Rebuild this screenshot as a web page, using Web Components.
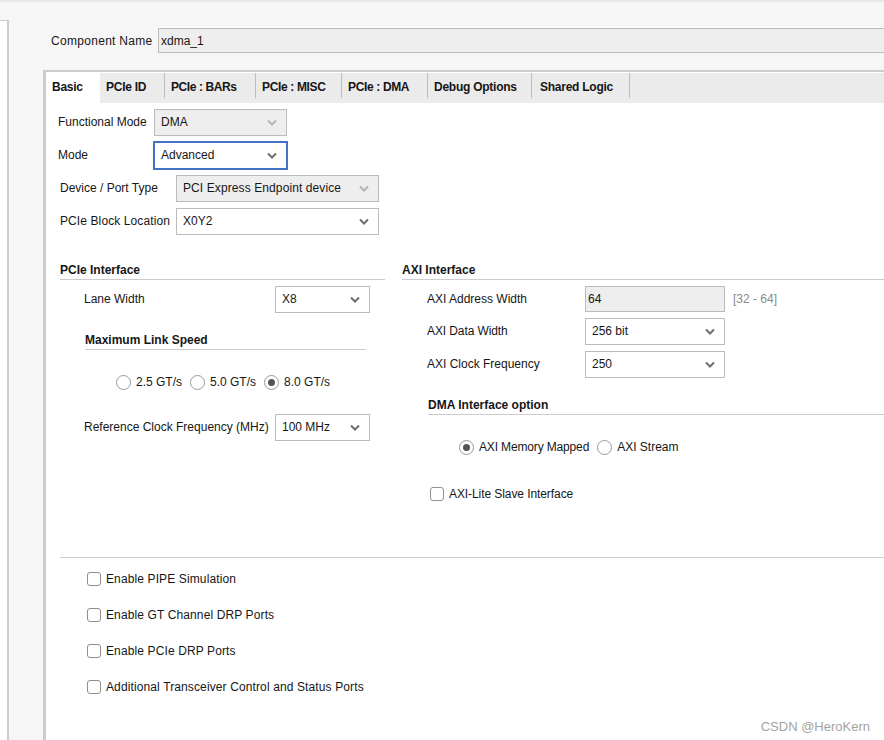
<!DOCTYPE html>
<html>
<head>
<meta charset="utf-8">
<style>
  html, body { margin: 0; height: 740px; overflow: hidden; }
  body { background: #f6f6f6; font: 12px "Liberation Sans", Arial, sans-serif; color: #161616; }
</style>
</head>
<body>
<ip-customizer>
  <ip-name-row slot="name">xdma_1</ip-name-row>
  <ip-tabs slot="tabs">
    <ip-tab active style="--w:54px">Basic</ip-tab>
    <ip-tab style="--w:65px">PCIe ID</ip-tab>
    <ip-tab style="--w:91px;letter-spacing:-.4px">PCIe : BARs</ip-tab>
    <ip-tab style="--w:86px;letter-spacing:-.35px">PCIe : MISC</ip-tab>
    <ip-tab style="--w:86px;letter-spacing:-.35px">PCIe : DMA</ip-tab>
    <ip-tab style="--w:104px">Debug Options</ip-tab>
    <ip-tab style="--w:98px" pad="8">Shared Logic</ip-tab>
  </ip-tabs>
  <basic-page slot="page"></basic-page>
</ip-customizer>

<script>
// small helper so each class does not repeat the shadow root setup
function shadow(el, html) {
  el.attachShadow({ mode: 'open' }).innerHTML = html;
}

// outer window: grey strip on top, side panel on the left, main column
class IpCustomizer extends HTMLElement {
  constructor() {
    super();
    shadow(this, `
      <style>
        :host { display: flex; height: 738px; border-top: 2px solid #e8e8e8; position: relative; }
        .side { width: 7px; margin-top: 18px; background: #fff; border-top: 1px solid #ccc; border-right: 2px solid #ccc; }
        .main { flex: 1; min-width: 0; margin-left: 34px; display: flex; flex-direction: column; }
        .box { flex: 1; margin-top: 17px; border-top: 2px solid #ccc; border-left: 3px solid #ccc; background: #fff; padding-top: 1px; }
        .mark { position: absolute; right: 14px; bottom: 6px; font-size: 13px; color: #a3a3a3; }
      </style>
      <div class="side"></div>
      <div class="main">
        <slot name="name"></slot>
        <div class="box">
          <slot name="tabs"></slot>
          <slot name="page"></slot>
        </div>
      </div>
      <div class="mark">CSDN @HeroKern</div>
    `);
  }
}

class IpNameRow extends HTMLElement {
  constructor() {
    super();
    shadow(this, `
      <style>
        :host { display: flex; align-items: center; margin-top: 26px; padding-left: 8px; height: 25px; }
        .label { width: 107px; letter-spacing: .3px; white-space: nowrap; }
        .field { flex: 1; height: 23px; line-height: 24px; padding-left: 2px; background: #eee;
                 border: 1px solid #bbb; border-right: 0; box-shadow: 0 -1px 0 #fff; }
      </style>
      <span class="label">Component Name</span>
      <div class="field"><slot></slot></div>
    `);
  }
}

class IpTabs extends HTMLElement {
  constructor() {
    super();
    shadow(this, `
      <style>
        :host { display: flex; height: 30px; background: #ebebeb; }
      </style>
      <slot></slot>
    `);
  }
}

class IpTab extends HTMLElement {
  constructor() {
    super();
    const pad = this.getAttribute('pad') || 6;
    shadow(this, `
      <style>
        :host { display: block; box-sizing: border-box; width: var(--w); height: 30px; letter-spacing: -.25px; }
        :host([active]) { background: #fff; }
        .in { box-sizing: border-box; height: 25px; line-height: 29px; padding-left: ${pad}px; font-weight: bold; white-space: nowrap; }
        :host(:not([active])) .in { border-right: 1px solid #bdbdbd; }
      </style>
      <div class="in"><slot></slot></div>
    `);
  }
}

// drop down, attributes: disabled, focused
class IpCombo extends HTMLElement {
  constructor() {
    super();
    shadow(this, `
      <style>
        :host { display: flex; box-sizing: border-box; flex: none; align-items: center; justify-content: space-between;
                width: var(--w, 133px); height: 27px; padding: 0 9px 0 6px; background: #fff; border: 1px solid #bbb; }
        :host([disabled]) { background: #eee; }
        :host([focused]) { border: 2px solid #4472c4; width: calc(var(--w, 133px) + 2px); height: 29px; margin: -1px; }
        span { padding-bottom: 2px; }
        svg { width: 10px; height: 7px; fill: none; stroke: #6e6e6e; stroke-width: 2; }
        :host([disabled]) svg { stroke: #b4b4b4; }
      </style>
      <span><slot></slot></span>
      <svg viewBox="0 0 10 7"><path d="M1 1.5 5 5.5 9 1.5"/></svg>
    `);
  }
}

class IpCheck extends HTMLElement {
  constructor() {
    super();
    shadow(this, `
      <style>
        :host { display: flex; align-items: center; height: 16px; gap: 5px; }
        i { box-sizing: border-box; width: 14px; height: 14px; background: #fff; border: 1px solid #8f8f8f; border-radius: 3px; }
      </style>
      <i></i><span><slot></slot></span>
    `);
  }
}

class IpRadio extends HTMLElement {
  constructor() {
    super();
    shadow(this, `
      <style>
        :host { display: inline-flex; align-items: center; height: 16px; gap: 5px; }
        i { box-sizing: border-box; width: 15px; height: 15px; border: 1px solid #999; border-radius: 50%; background: #fff;
            display: flex; align-items: center; justify-content: center; }
        :host([checked]) b { display: block; width: 7px; height: 7px; border-radius: 50%; background: #555; }
      </style>
      <i><b></b></i><span><slot></slot></span>
    `);
  }
}

// section title with the rule under it
class IpHeading extends HTMLElement {
  constructor() {
    super();
    shadow(this, `
      <style>
        :host { display: block; height: 19px; line-height: 21px; border-bottom: 1px solid #ccc; font-weight: bold; white-space: nowrap; }
      </style>
      <slot></slot>
    `);
  }
}

// label + control row, --l sets the label column
class IpRow extends HTMLElement {
  constructor() {
    super();
    shadow(this, `
      <style>
        :host { display: flex; align-items: center; height: 27px; }
        .label { flex: none; width: var(--l, 96px); white-space: nowrap; padding-bottom: var(--lift, 2px); }
      </style>
      <span class="label"><slot name="label"></slot></span>
      <slot></slot>
    `);
  }
}

class BasicPage extends HTMLElement {
  constructor() {
    super();
    shadow(this, `
      <style>
        :host { display: block; padding: 6px 0 0 12px; }
        .top ip-row { margin-bottom: 6px; }
        .top .a { --l: 96px; }
        .top .b { --l: 116px; margin-left: 2px; --w: 203px; }
        .cols { display: grid; grid-template-columns: 325px 1fr; column-gap: 17px; margin: 25px 0 0 2px; }
        .left .in { padding-left: 24px; }
        .right .in { padding-left: 25px; }
        .left ip-row { --l: 191px; --w: 95px; }
        .right ip-row { --l: 158px; --w: 140px; }
        .gap { margin-top: 6px; }
        .sub { margin: 17px 0 0 1px; }
        .left .sub { width: 281px; }
        .radios { display: flex; margin-top: 24px; gap: 8px; }
        .left .radios { padding-left: 32px; }
        .right .radios { padding-left: 32px; }
        .input { box-sizing: border-box; width: 140px; height: 26px; line-height: 24px; padding-left: 2px; background: #eee; border: 1px solid #bbb; }
        .hint { margin-left: 8px; color: #8a8a8a; }
        .lite { margin: 31px 0 0 3px; letter-spacing: -.08px; }
        hr { height: 1px; margin: 55px 0 0 2px; border: 0; background: #ccc; }
        .opts { display: flex; flex-direction: column; gap: 20px; margin: 13px 0 0 29px; letter-spacing: .12px; }
      </style>
      <div class="top">
        <ip-row class="a"><span slot="label">Functional Mode</span><ip-combo disabled>DMA</ip-combo></ip-row>
        <ip-row class="a"><span slot="label">Mode</span><ip-combo focused>Advanced</ip-combo></ip-row>
        <ip-row class="b"><span slot="label">Device / Port Type</span><ip-combo disabled style="letter-spacing:.1px">PCI Express Endpoint device</ip-combo></ip-row>
        <ip-row class="b"><span slot="label" style="letter-spacing:.1px">PCIe Block Location</span><ip-combo>X0Y2</ip-combo></ip-row>
      </div>
      <div class="cols">
        <div class="left">
          <ip-heading>PCIe Interface</ip-heading>
          <div class="in">
            <ip-row class="gap"><span slot="label">Lane Width</span><ip-combo>X8</ip-combo></ip-row>
            <ip-heading class="sub">Maximum Link Speed</ip-heading>
            <div class="radios">
              <ip-radio>2.5 GT/s</ip-radio>
              <ip-radio>5.0 GT/s</ip-radio>
              <ip-radio checked>8.0 GT/s</ip-radio>
            </div>
            <ip-row style="margin-top:24px"><span slot="label">Reference Clock Frequency (MHz)</span><ip-combo>100 MHz</ip-combo></ip-row>
          </div>
        </div>
        <div class="right">
          <ip-heading>AXI Interface</ip-heading>
          <div class="in">
            <ip-row class="gap" style="height:26px;--lift:0px"><span slot="label">AXI Address Width</span><div class="input">64</div><span class="hint">[32 - 64]</span></ip-row>
            <ip-row class="gap"><span slot="label" style="letter-spacing:-.1px">AXI Data Width</span><ip-combo>256 bit</ip-combo></ip-row>
            <ip-row class="gap"><span slot="label">AXI Clock Frequency</span><ip-combo>250</ip-combo></ip-row>
            <ip-heading class="sub">DMA Interface option</ip-heading>
            <div class="radios">
              <ip-radio checked style="letter-spacing:-.15px">AXI Memory Mapped</ip-radio>
              <ip-radio>AXI Stream</ip-radio>
            </div>
            <ip-check class="lite">AXI-Lite Slave Interface</ip-check>
          </div>
        </div>
      </div>
      <hr>
      <div class="opts">
        <ip-check>Enable PIPE Simulation</ip-check>
        <ip-check>Enable GT Channel DRP Ports</ip-check>
        <ip-check>Enable PCIe DRP Ports</ip-check>
        <ip-check>Additional Transceiver Control and Status Ports</ip-check>
      </div>
    `);
  }
}

customElements.define('ip-customizer', IpCustomizer);
customElements.define('ip-name-row', IpNameRow);
customElements.define('ip-tabs', IpTabs);
customElements.define('ip-tab', IpTab);
customElements.define('ip-combo', IpCombo);
customElements.define('ip-check', IpCheck);
customElements.define('ip-radio', IpRadio);
customElements.define('ip-heading', IpHeading);
customElements.define('ip-row', IpRow);
customElements.define('basic-page', BasicPage);
</script>
</body>
</html>
